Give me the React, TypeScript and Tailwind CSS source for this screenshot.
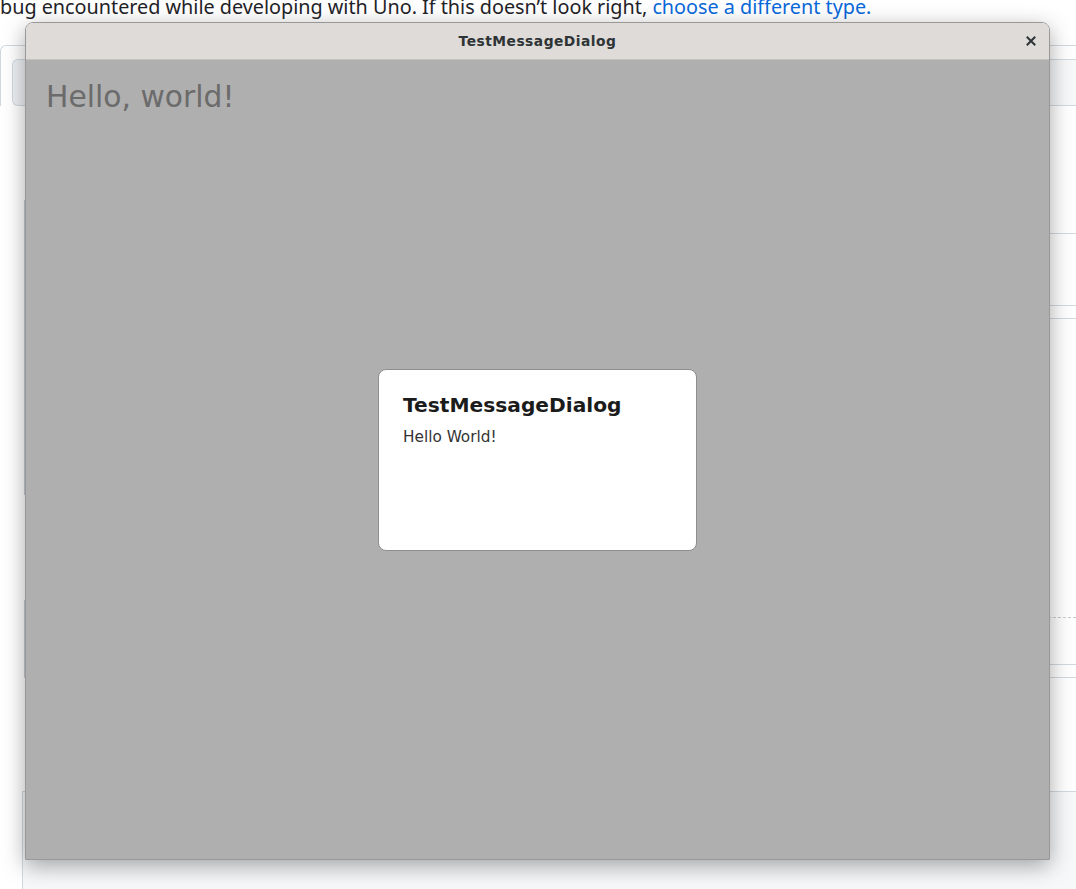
import React from 'react';

const dejavu = { fontFamily: '"DejaVu Sans", Verdana, "Bitstream Vera Sans", sans-serif' };

const CloseIcon: React.FC = () => (
  <svg width="10" height="10" viewBox="0 0 10 10" className="text-[#2e3436]">
    <path d="M1.5 1.5l7 7M8.5 1.5l-7 7" stroke="currentColor" strokeWidth={2} strokeLinecap="square" />
  </svg>
);

const BackgroundPage: React.FC = () => (
  <div className="flex flex-col h-full" style={{ fontFamily: '"Noto Sans", sans-serif' }}>
    {/* scrolled issue template text, top half cut off */}
    <div className="h-[45px] overflow-hidden">
      <p className="-mt-[5px] text-[19.8px] leading-[24px] text-[#1f2328] whitespace-nowrap">
        bug encountered while developing with Uno. If this doesn’t look right,{' '}
        <span className="text-[#0969da]">choose a different type.</span>
      </p>
    </div>
    {/* title input box */}
    <div className="h-[61px] border-t border-l border-[#d1d9e0] rounded-tl-md pl-[11px] pt-[13px]">
      <div className="h-[47px] border border-r-0 border-[#d1d9e0] rounded-l-md bg-gradient-to-r from-[#eef1f4] to-[#f6f8fa]" />
    </div>
    <div className="h-[94px]" />
    <div className="h-[295px] ml-[24px] border-l border-[#c4ccd4] flex flex-col">
      <div className="h-[33px]" />
      <div className="h-[72px] border-t border-[#d1d9e0]" />
      <div className="h-[13px] border-t border-[#d1d9e0]" />
      <div className="flex-1 border-t border-[#d1d9e0]" />
    </div>
    <div className="h-[105px]" />
    <div className="h-[77px] ml-[24px] border-l border-[#c4ccd4] flex flex-col">
      <div className="h-[17px]" />
      <div className="h-[47px] border-t border-dashed border-[#c8cdd2]" />
      <div className="flex-1 border-t border-[#d1d9e0]" />
    </div>
    <div className="h-[114px] ml-[24px] border-t border-[#d1d9e0]" />
    <div className="flex-1 ml-[22px] border-t border-l border-[#d1d9e0] bg-[#f6f8fa]" />
  </div>
);

const App: React.FC = () => {
  return (
    <div className="relative w-[1076px] h-[889px] overflow-hidden bg-white">
      <BackgroundPage />

      {/* App window */}
      <div
        className="absolute left-[25px] top-[22px] w-[1025px] h-[838px] flex flex-col rounded-t-[8px] border border-[#9a9896] shadow-[0_6px_22px_rgba(0,0,0,0.35)] overflow-hidden"
        style={dejavu}
      >
        <div className="relative h-[37px] shrink-0 flex items-center justify-center bg-[#dedbd8] border-b border-[#c6c2bd]">
          <span className="text-[13.8px] font-bold tracking-[0.5px] text-[#2e3436]">TestMessageDialog</span>
          <div className="absolute right-[13px] top-[13px]">
            <CloseIcon />
          </div>
        </div>

        <div className="relative flex-1 bg-[#afafaf]">
          <div className="pl-[20px] pt-[17px] text-[29.8px] leading-[40px] text-[#6b6b6b]">Hello, world!</div>

          {/* Message dialog */}
          <div className="absolute inset-0 flex items-center justify-center">
            <div className="w-[319px] h-[182px] bg-white rounded-[8px] border border-[#8e8e8e] pl-[24px] pr-[20px] pt-[23px]">
              <div className="text-[20.2px] leading-[24px] font-bold text-[#1b1b1b]">TestMessageDialog</div>
              <div className="mt-[10px] text-[15.3px] leading-[20px] text-[#333333]">Hello World!</div>
            </div>
          </div>
        </div>
      </div>
    </div>
  );
};

export default App;
